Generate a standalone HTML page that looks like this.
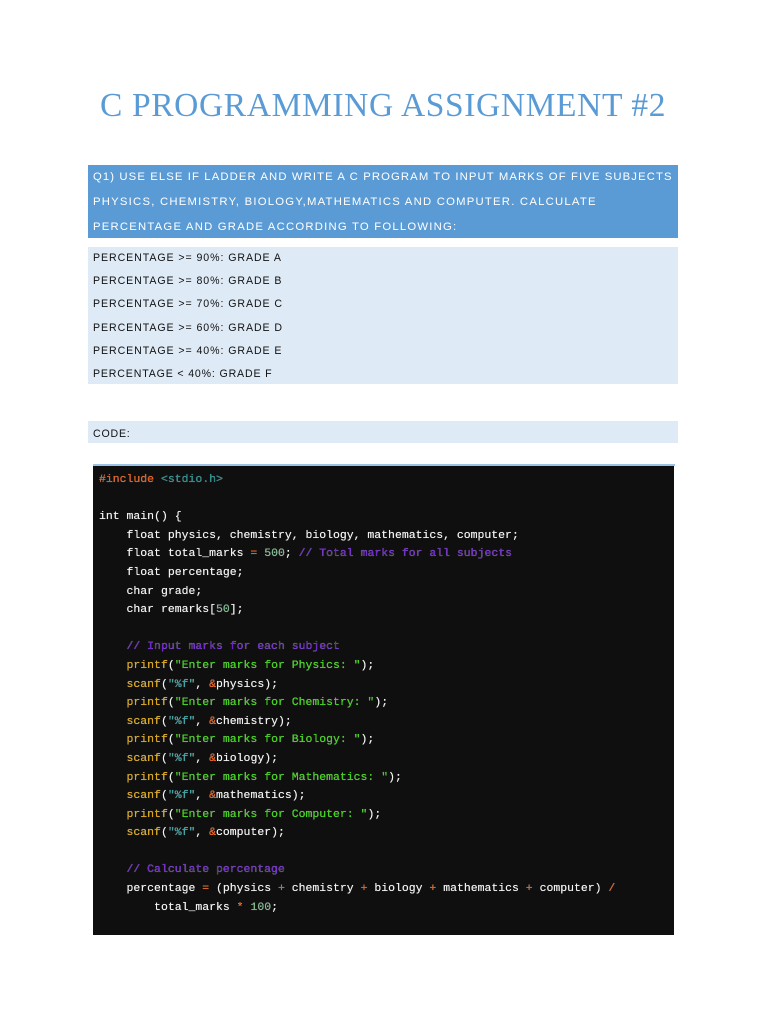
<!DOCTYPE html>
<html>
<head>
<meta charset="utf-8">
<style>
html,body{margin:0;padding:0;background:#fff;}
#p{position:relative;width:768px;height:1024px;overflow:hidden;background:#fff;}
.a{position:absolute;white-space:pre;}
.title{left:100px;top:85px;font:33.5px/42px "Liberation Serif",serif;color:#5b9bd5;letter-spacing:.62px;filter:blur(.25px);}
.b{font:11.3px/20px "Liberation Sans",sans-serif;left:93px;filter:blur(.2px);}
.w{color:#fff;}
.k{color:#111;font-size:10.6px;letter-spacing:.93px;}
#code{left:99px;top:471px;font:11.47px/18.6px "Liberation Mono",monospace;color:#f2f2f2;text-shadow:0 0 .4px #fff;filter:blur(.25px);}
.o{color:#e8560f}.t{color:#1f8a8a}.c{color:#6a22c8}.g{color:#35d60c}.y{color:#dca40e}.n{color:#79b48a}.v{color:#35a0a0}
</style>
</head>
<body>
<div id="p">
<div class="a title">C PROGRAMMING ASSIGNMENT #2</div>
<div class="a" style="left:88px;top:165px;width:590px;height:73px;background:#5b9bd5"></div>
<div class="a b w" style="top:167px;letter-spacing:1.11px">Q1) USE ELSE IF LADDER AND WRITE A C PROGRAM TO INPUT MARKS OF FIVE SUBJECTS</div>
<div class="a b w" style="top:192px;letter-spacing:1.23px">PHYSICS, CHEMISTRY, BIOLOGY,MATHEMATICS AND COMPUTER. CALCULATE</div>
<div class="a b w" style="top:217px;letter-spacing:1.22px">PERCENTAGE AND GRADE ACCORDING TO FOLLOWING:</div>
<div class="a" style="left:88px;top:247px;width:590px;height:137px;background:#deeaf6"></div>
<div class="a b k" style="top:248px">PERCENTAGE &gt;= 90%: GRADE A</div>
<div class="a b k" style="top:271px">PERCENTAGE &gt;= 80%: GRADE B</div>
<div class="a b k" style="top:294px">PERCENTAGE &gt;= 70%: GRADE C</div>
<div class="a b k" style="top:318px">PERCENTAGE &gt;= 60%: GRADE D</div>
<div class="a b k" style="top:341px">PERCENTAGE &gt;= 40%: GRADE E</div>
<div class="a b k" style="top:364px;letter-spacing:.84px">PERCENTAGE &lt; 40%: GRADE F</div>
<div class="a" style="left:88px;top:421px;width:590px;height:22px;background:#deeaf6"></div>
<div class="a b k" style="top:424px;letter-spacing:.8px">CODE:</div>
<div class="a" style="left:93px;top:464px;width:582px;height:2px;background:#9cc2e5"></div>
<div class="a" style="left:93px;top:466px;width:581px;height:469px;background:#0f0f0f"></div>
<div class="a" id="code"><span class="o">#include</span> <span class="t">&lt;stdio.h&gt;</span>

int main() {
    float physics, chemistry, biology, mathematics, computer;
    float total_marks <span class="o">=</span> <span class="n">500</span>; <span class="c">// Total marks for all subjects</span>
    float percentage;
    char grade;
    char remarks[<span class="n">50</span>];

    <span class="c">// Input marks for each subject</span>
    <span class="y">printf</span>(<span class="g">"Enter marks for Physics: "</span>);
    <span class="y">scanf</span>(<span class="v">"%f"</span>, <span class="o">&amp;</span>physics);
    <span class="y">printf</span>(<span class="g">"Enter marks for Chemistry: "</span>);
    <span class="y">scanf</span>(<span class="v">"%f"</span>, <span class="o">&amp;</span>chemistry);
    <span class="y">printf</span>(<span class="g">"Enter marks for Biology: "</span>);
    <span class="y">scanf</span>(<span class="v">"%f"</span>, <span class="o">&amp;</span>biology);
    <span class="y">printf</span>(<span class="g">"Enter marks for Mathematics: "</span>);
    <span class="y">scanf</span>(<span class="v">"%f"</span>, <span class="o">&amp;</span>mathematics);
    <span class="y">printf</span>(<span class="g">"Enter marks for Computer: "</span>);
    <span class="y">scanf</span>(<span class="v">"%f"</span>, <span class="o">&amp;</span>computer);

    <span class="c">// Calculate percentage</span>
    percentage <span class="o">=</span> (physics <span class="o">+</span> chemistry <span class="o">+</span> biology <span class="o">+</span> mathematics <span class="o">+</span> computer) <span class="o">/</span>
        total_marks <span class="o">*</span> <span class="n">100</span>;</div>
</div>
</body>
</html>
